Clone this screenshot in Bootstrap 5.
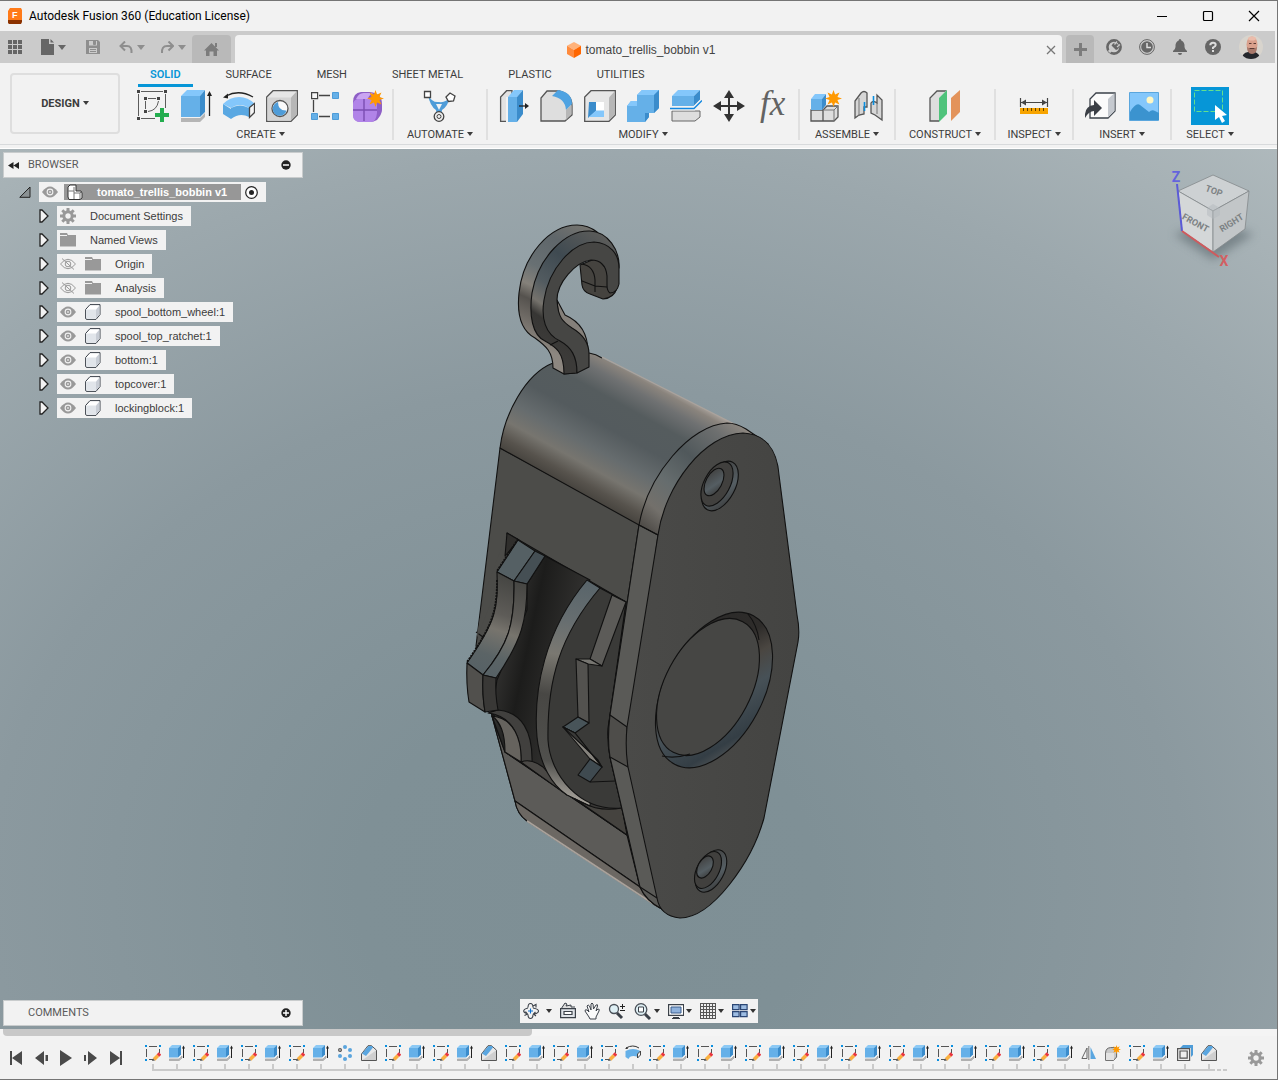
<!DOCTYPE html>
<html lang="en">
<head>
<meta charset="utf-8">
<meta name="viewport" content="width=device-width, initial-scale=1">
<title>Autodesk Fusion 360 (Education License)</title>
<link href="https://cdn.jsdelivr.net/npm/bootstrap@5.3.0/dist/css/bootstrap.min.css" rel="stylesheet">
<style>
:root { --ui: #f2f2f2; --bar: #cbcbcb; --ink: #3c3c3c; --accent: #0696d7; }
body { font-family: "Liberation Sans", Arial, sans-serif; font-size: 11px; line-height: 16px; color: var(--ink); background: var(--ui); min-height: 100vh; border: solid #757575; border-width: 1px 1px 1px 0; }
button { border: 0; background: none; padding: 0; color: inherit; }
a { color: inherit; text-decoration: none; }
svg { display: block; flex: none; }
.titlebar { height: 30px; padding: 0 17px 0 7px; font: 12px/16px Roboto, "Noto Sans", sans-serif; color: #000; gap: 6px; }
.winctl { gap: 34px; }
.tabbar { height: 32px; background: var(--bar); color: #666; margin-right: 2px; }
.quick { width: 192px; padding: 0 6px 0 8px; }
.faded { color: #8e8e8e; }
.hometab, .plustab { height: 28px; background: #b9b9b9; border-radius: 4px 4px 0 0; color: #7c7c7c; }
.hometab { width: 39px; }
.plustab { width: 28px; margin-left: 4px; }
.doctab { height: 28px; background: var(--ui); border-radius: 4px 4px 0 0; margin-left: 4px; padding: 2px 6px 0 2px; font-size: 12px; color: #444; }
.account { gap: 17px; padding: 0 12px 0 12px; }
.avatar { margin-left: 1px; }
.ribbon { height: 86px; border-bottom: 1px solid #fff; }
.ribbon-in { height: 82px; border-bottom: 1px solid #d8dadc; }
.design { width: 110px; height: 61px; margin: 10px 11px 0 10px; border: 2px solid #dedede; border-radius: 4px; font: bold 11px/16px Roboto, sans-serif; }
.caps { font: 11px/16px Roboto, "Liberation Sans", sans-serif; }
.ribtabs { gap: 21px; padding-left: 7px; height: 24px; }
.ribtabs a { padding: 4px 12px 1px; border-bottom: 3px solid transparent; }
.ribtabs a.current { color: var(--accent); border-color: var(--accent); font-weight: 600; }
.group { height: 51px; margin-top: 2px; border-right: 2px solid #e0e0e0; padding: 1px 5px 0; }
.group:last-child { border: 0; }
.group.g-create { width: 263px; padding: 1px 2px 0 0; } .g-auto { width: 94px; } .g-mod { width: 312px; } .g-asm { width: 96px; }
.g-con { width: 100px; } .g-insp { width: 78px; } .g-ins { width: 98px; } .g-sel { width: 76px; }
.tools { height: 37px; }
.tools button { width: 43px; display: flex; justify-content: center; align-items: flex-start; }
.tools .picked { background: var(--accent); width: 38px; height: 38px; margin-top: -3px; align-items: center; }
.caret::after { content: ""; display: inline-block; margin-left: 3px; vertical-align: 2px; border: 3px solid transparent; border-top: 4px solid; border-bottom: 0; }
.tri { border: 4px solid transparent; border-top: 5px solid; border-bottom: 0; }
.tri-s { border: 3px solid transparent; border-top: 4px solid #333; border-bottom: 0; }
.view { background: radial-gradient(ellipse 90% 110% at 46% 84%, #7e8f95, #7f9096 20%, #8b999f 52%, #9ca8ad 76%, #b1bbbe); min-height: 640px; }
.panelbar { width: 300px; height: 26px; background: var(--ui); border: 1px solid #c9cccd; padding: 0 11px 0 4px; color: #5a5a5a; }
.panelbar .heading { margin: 0 auto 0 9px; }
.panelbar .heading.alone { margin-left: 20px; }
.sidecol { padding: 3px; }
.tree { margin: 4px 0 0 16px; gap: 4px; }
.node { gap: 8px; height: 20px; }
.node.child { padding-left: 20px; }
.tag { background: var(--ui); height: 20px; padding: 0 8px 0 3px; }
.tag .txt { margin-left: 14px; }
.tag svg + svg { margin-left: 9px; }
.rootname { background: #979797; color: #fff; font-weight: bold; height: 16px; padding: 0 14px 0 3px; margin: 0 4px 0 6px; gap: 14px; }
.navbox { height: 24px; background: var(--ui); left: 50%; bottom: 6px; transform: translateX(-50%); padding: 0 2px 0 3px; gap: 8px; }
.navbox button { display: flex; align-items: center; gap: 2px; }
.scroller { height: 7px; background: #f4f4f4; }
.scroller div { width: 41.4%; height: 7px; margin-left: 3px; background: #c8c8c8; border-radius: 0 0 4px 4px; }
.timeline { height: 43px; color: #4a4a4a; padding: 0 13px 0 9px; }
.play { width: 114px; margin-right: 18px; padding-top: 14px; }
.steps { padding-top: 9px; height: 35px; }
.steps button { width: 24px; height: 26px; position: relative; display: flex; justify-content: center; }
.steps button::after { content: ""; position: absolute; inset: 19px 0 0 0; border-bottom: 2px solid #cacaca; background: linear-gradient(#cacaca, #cacaca) 11px 0 / 2px 100% no-repeat; }
.steps button:first-child::after { left: 11px; background-position: 0 0; }
.steps button:last-child::after { right: 6px; }
.dashes { width: 10px; height: 35px; margin: 0 auto 0 -4px; background: repeating-linear-gradient(90deg, #cacaca 0 4px, transparent 4px 6px) bottom / 100% 2px no-repeat; }
</style>
<script src="https://cdn.jsdelivr.net/npm/bootstrap@5.3.0/dist/js/bootstrap.bundle.min.js"></script>
</head>
<body class="d-flex flex-column">
<svg width="0" height="0" class="position-absolute" aria-hidden="true">
  <symbol id="star" viewBox="0 0 16 16"><path fill="#f90" d="M8 0l1.500 4.300L13.600 2.400 11.700 6.500 16 8l-4.300 1.500 1.900 4.100-4.100-1.900L8 16l-1.500-4.300-4.100 1.900 1.900-4.100L0 8l4.300-1.500-1.900-4.100 4.100 1.900z"/></symbol>
  <symbol id="eye" viewBox="0 0 16 12"><path fill="#999" d="M0 6q8-11 16 0q-8 11-16 0"/><circle cx="8" cy="6" r="3.400" fill="#f2f2f2"/><circle cx="8" cy="6" r="2.300" fill="#999"/><circle cx="8" cy="6" r="1" fill="#ddd"/></symbol>
  <symbol id="eyeoff" viewBox="0 0 16 12"><g fill="none" stroke="#999"><path d="M.5 6q7.500-9.500 15 0q-7.500 9.500-15 0"/><circle cx="8" cy="6" r="2.800"/><path d="M2 .5l12 11"/></g></symbol>
  <symbol id="folder" viewBox="0 0 16 14"><path fill="#999" d="M0 0h7l1 2h8v11.500H0z"/><path stroke="#f2f2f2" d="M0 2.500h7"/></symbol>
  <symbol id="gear" viewBox="0 0 16 16"><g fill="none" stroke="#999"><circle cx="8" cy="8" r="4.200" stroke-width="3"/><path stroke-width="3" d="M8 0v3M8 13v3M0 8h3M13 8h3M2.300 2.300l2.200 2.200M11.500 11.500l2.200 2.200M13.700 2.300l-2.200 2.200M4.500 11.500l-2.200 2.200"/></g></symbol>
  <symbol id="cube" viewBox="0 0 16 16"><path fill="#fff" stroke="#3b4149" d="M.6 14V5.500L5 .6h10v10L11 15.400H2Q.6 15.400.6 14z"/><path fill="#e1e5ea" d="M1.200 5.500H11v9.300H2l-.8-.8z"/><path fill="#c8cdd5" d="M11 5.500l3.500-4v8.800L11 14.500z"/></symbol>
  <symbol id="arrow" viewBox="0 0 10 14"><path d="M1 1h2l6 6-6 6H1z" fill="#f2f2f2" stroke="#222" stroke-width="1.300"/></symbol>
  <symbol id="sketch" viewBox="0 0 16 16"><path d="M4 1.500h8M1.500 4v8M14.500 4v4M4 14.500h4" stroke="#555" fill="none"/><path fill="#0a8fe0" d="M0 0h2v2H0zM14 0h2v2h-2zM0 14h2v2H0z"/><path stroke="#fbb040" stroke-width="3.500" d="M9 14.500l4-4"/><path stroke="#e8343c" stroke-width="3.500" d="M13 10.500l2-2"/><path d="M7 16l3-.6-2-2z" fill="#555"/></symbol>
  <symbol id="extr" viewBox="0 0 16 16"><path fill="#bbb" stroke="#999" stroke-width=".6" d="M.3 14H10l3-3v2l-3 2.700H.3z"/><path fill="#65b0e8" d="M0 3h9v9.500H0z"/><path fill="#8cc9f5" d="M0 3l3-3h9L9 3z"/><path fill="#3b8ccb" d="M9 3l3-3v9.500l-3 3z"/><path d="M14.500 13V2" stroke="#222"/><path d="M13 3.500L14.500.5l1.500 3z" fill="#222"/></symbol>
  <symbol id="pat" viewBox="0 0 16 16"><g fill="#5ba5dd"><circle cx="8" cy="2" r="2"/><circle cx="13" cy="5" r="2"/><circle cx="13" cy="11" r="2"/><circle cx="8" cy="14" r="2"/><circle cx="3" cy="11" r="2"/></g><circle cx="3" cy="5" r="1.400" fill="none" stroke="#555" stroke-width="1.200"/></symbol>
  <symbol id="cham" viewBox="0 0 16 16"><path d="M.5 15.500V9L7 .7h3.500l5 4.500v10.300z" fill="#e8e8e8" stroke="#555"/><path d="M1.500 15L15 5.500V15z" fill="#cfcfcf"/><path d="M1 8.500L7.500 1H11l1 1.500L5 11z" fill="#5aa6e0"/></symbol>
  <symbol id="revo" viewBox="0 0 16 16"><path d="M1 3q7-4 13 0" stroke="#333" fill="none"/><path d="M0 4h3l-1-2z" fill="#333"/><path d="M.5 6q7.500-4 15 0l-2 7q-1-2-5-2t-5 3l-3-2z" fill="#65b0e8"/><path d="M12.500 13v-4l3-3v4z" fill="#eee" stroke="#444"/></symbol>
  <symbol id="mirr" viewBox="0 0 16 16"><path d="M.9 13.500L6 3v10.500z" fill="none" stroke="#666"/><path d="M9.500 2l5.500 12H9.500z" fill="#5aa6e0"/><path d="M7.800 1v14" stroke="#777"/></symbol>
  <symbol id="form" viewBox="0 0 16 16"><path d="M.6 15.400V8q0-5 5-5.400h6V12l-3 3.400z" fill="#c8c8c8" stroke="#666"/><path d="M1 15V8h8v7z" fill="#e2e2e2"/><use href="#star" x="7" y="0" width="9" height="9"/></symbol>
  <symbol id="shel" viewBox="0 0 16 16"><path d="M3 3l3-3h10v10l-2 2V3z" fill="#4e9cd8"/><path d="M.6 3.600h12v12H.6zM3 6h7.200v7.200H3z" fill="#eee" stroke="#555" stroke-width="1.200"/></symbol>
  <linearGradient id="roof" gradientUnits="userSpaceOnUse" x1="570" y1="487" x2="635" y2="369"><stop offset="0" stop-color="#47443f"/><stop offset=".08" stop-color="#57534d"/><stop offset=".2" stop-color="#77756f"/><stop offset=".34" stop-color="#666c6e"/><stop offset=".52" stop-color="#545b5e"/><stop offset=".72" stop-color="#555c5e"/><stop offset=".86" stop-color="#6f7172"/><stop offset=".95" stop-color="#8a847d"/><stop offset="1" stop-color="#aaa39d"/></linearGradient>
  <linearGradient id="rim" gradientUnits="userSpaceOnUse" x1="648" y1="530" x2="740" y2="425"><stop offset="0" stop-color="#504d49"/><stop offset=".15" stop-color="#73706b"/><stop offset=".35" stop-color="#666d6e"/><stop offset=".6" stop-color="#50585b"/><stop offset=".85" stop-color="#6d6f6f"/><stop offset="1" stop-color="#8d8780"/></linearGradient>
  <linearGradient id="hookside" gradientUnits="userSpaceOnUse" x1="590" y1="225" x2="535" y2="345"><stop offset="0" stop-color="#77756f"/><stop offset=".2" stop-color="#5f666a"/><stop offset=".45" stop-color="#687073"/><stop offset=".6" stop-color="#85817a"/><stop offset=".7" stop-color="#55524e"/><stop offset="1" stop-color="#8d8780"/></linearGradient>
  <linearGradient id="hookbev" gradientUnits="userSpaceOnUse" x1="618" y1="240" x2="545" y2="345"><stop offset="0" stop-color="#5f5e5b"/><stop offset=".35" stop-color="#3f4a51"/><stop offset=".6" stop-color="#525b60"/><stop offset=".75" stop-color="#75726c"/><stop offset=".84" stop-color="#373634"/><stop offset="1" stop-color="#3c3b39"/></linearGradient>
  <linearGradient id="wheel" gradientUnits="userSpaceOnUse" x1="515" y1="580" x2="480" y2="680"><stop offset="0" stop-color="#464643"/><stop offset=".35" stop-color="#5e5c58"/><stop offset=".5" stop-color="#77746d"/><stop offset=".75" stop-color="#5b6466"/><stop offset="1" stop-color="#556065"/></linearGradient>
  <linearGradient id="disk" gradientUnits="userSpaceOnUse" x1="590" y1="580" x2="555" y2="795"><stop offset="0" stop-color="#58646a"/><stop offset=".2" stop-color="#676e70"/><stop offset=".36" stop-color="#7a7871"/><stop offset=".55" stop-color="#484744"/><stop offset=".85" stop-color="#50504d"/><stop offset="1" stop-color="#a09c95"/></linearGradient>
  <linearGradient id="face" x1="0" x2="1"><stop offset="0" stop-color="#4a4a48"/><stop offset="1" stop-color="#444442"/></linearGradient>
  <linearGradient id="dark" x1="0" x2="1" y2=".5"><stop offset="0" stop-color="#474644"/><stop offset=".45" stop-color="#1c1c1b"/><stop offset="1" stop-color="#3b3a38"/></linearGradient>
  <linearGradient id="ring" gradientUnits="userSpaceOnUse" x1="765" y1="615" x2="675" y2="768"><stop offset="0" stop-color="#62605c"/><stop offset=".14" stop-color="#2b2a29"/><stop offset=".34" stop-color="#2e2c2a"/><stop offset=".46" stop-color="#4a4641"/><stop offset=".6" stop-color="#475157"/><stop offset=".8" stop-color="#343e45"/><stop offset="1" stop-color="#77736d"/></linearGradient>
  <linearGradient id="hole" x1="1" x2="0" y2="1"><stop offset="0" stop-color="#3d3b39"/><stop offset=".6" stop-color="#555e63"/><stop offset="1" stop-color="#343332"/></linearGradient>
</svg>

<header class="titlebar d-flex align-items-center">
  <svg width="16" height="17" viewBox="0 0 16 17"><path d="M1 3L3 0h11l1 2v11l-1 1H1z" fill="#ff7a18"/><path d="M1 12h14v2l-1 2H2l-1-1z" fill="#8c3200"/><text x="5" y="10" font-family="Liberation Sans" font-size="9" font-weight="bold" fill="#fff">F</text></svg>
  <span class="me-auto">Autodesk Fusion 360 (Education License)</span>
  <div class="winctl d-flex">
    <button aria-label="Minimize"><svg width="12" height="12"><path d="M1 6.500h10" stroke="#000"/></svg></button>
    <button aria-label="Maximize"><svg width="12" height="12"><rect x="1.500" y="1.500" width="9" height="9" rx="1" fill="none" stroke="#000" stroke-width="1.200"/></svg></button>
    <button aria-label="Close"><svg width="12" height="12"><path d="M1 1l10 10M11 1L1 11" stroke="#000" stroke-width="1.200"/></svg></button>
  </div>
</header>

<div class="tabbar d-flex align-items-end">
  <div class="quick d-flex align-items-center justify-content-between h-100">
    <button aria-label="Data panel"><svg width="14" height="14" fill="#666"><path d="M0 0h4v4H0zM5 0h4v4H5zM10 0h4v4h-4zM0 5h4v4H0zM5 5h4v4H5zM10 5h4v4h-4zM0 10h4v4H0zM5 10h4v4H5zM10 10h4v4h-4z"/></svg></button>
    <button aria-label="File" class="d-flex align-items-center gap-1 ms-1"><svg width="13" height="16" fill="#666"><path d="M0 0h8v5h5v11H0zM9.500 0L13 3.500H9.500z"/></svg><span class="tri"></span></button>
    <button aria-label="Save" class="ms-1"><svg width="14" height="14"><path d="M0 0h12l2 2v12H0z" fill="#8e8e8e"/><path d="M3 1h8v4.500H3zM3 8h8v5H3z" fill="#cbcbcb"/><path d="M7.500 1h2v3.500h-2zM4 9.500h6M4 11.500h6" stroke="#8e8e8e" fill="#8e8e8e"/></svg></button>
    <button aria-label="Undo" class="faded d-flex align-items-center gap-1 ms-1"><svg width="14" height="13"><path d="M2 5h6q5 0 4.500 7" fill="none" stroke="#8e8e8e" stroke-width="2"/><path d="M6 .5L1.500 5 6 9.500" fill="none" stroke="#8e8e8e" stroke-width="2"/></svg><span class="tri"></span></button>
    <button aria-label="Redo" class="faded d-flex align-items-center gap-1"><svg width="14" height="13"><path d="M12 5H7Q1.500 5 2 12" fill="none" stroke="#8e8e8e" stroke-width="2"/><path d="M8.500 .5L13 5 8.500 9.500" fill="none" stroke="#8e8e8e" stroke-width="2"/></svg><span class="tri"></span></button>
  </div>
  <button class="hometab d-flex align-items-center justify-content-center" aria-label="Home"><svg width="15" height="13"><path d="M7.500 0L15 7.500h-2V13H9.500V8.500h-4V13H2V7.500H0zM11 0h2v4h-2z" fill="#7c7c7c"/></svg></button>
  <div class="doctab d-flex align-items-center flex-grow-1">
    <span class="d-flex align-items-center gap-1 mx-auto"><svg width="14" height="16"><path d="M7 0l7 3.800L7 8 0 3.800z" fill="#ffb27a"/><path d="M0 3.800L7 8v8l-7-4z" fill="#ff8a3c"/><path d="M14 3.800L7 8v8l7-4z" fill="#f60"/></svg>tomato_trellis_bobbin v1</span>
    <button aria-label="Close tab"><svg width="10" height="10"><path d="M1 1l8 8M9 1L1 9" stroke="#777" stroke-width="1.300"/></svg></button>
  </div>
  <button class="plustab d-flex align-items-center justify-content-center" aria-label="New tab"><svg width="13" height="13"><path d="M6.500 0v13M0 6.500h13" stroke="#7c7c7c" stroke-width="3"/></svg></button>
  <div class="account d-flex align-items-center h-100">
    <button aria-label="Extensions"><svg width="16" height="16"><circle cx="8" cy="8" r="6.600" fill="none" stroke="#666" stroke-width="2.600"/><path d="M3 13l4.500-4.500" stroke="#cbcbcb" stroke-width="3"/><path d="M5.500 6.500l4.500 4.500q3-1 3.500-4L9.500 3.500q-3 .5-4 3z" fill="#666"/><path d="M8.500 5.500L11 2.500M11 8l3-2.500" stroke="#cbcbcb" stroke-width="1.300"/></svg></button>
    <button aria-label="Job status"><svg width="16" height="16"><circle cx="8" cy="8" r="7.400" fill="none" stroke="#666"/><circle cx="8" cy="8" r="5.800" fill="#666"/><path d="M8 4v4.500h4" fill="none" stroke="#ddd" stroke-width="1.500"/></svg></button>
    <button aria-label="Notifications"><svg width="16" height="16"><path d="M8 0q1.300 0 1.300 1.500Q13 3 12.500 8q0 2 2.500 4v1H1v-1q2.500-2 2.500-4Q3 3 6.700 1.500 6.700 0 8 0zM6 14h4q0 2-2 2t-2-2z" fill="#666"/></svg></button>
    <button aria-label="Help"><svg width="16" height="16"><circle cx="8" cy="8" r="8" fill="#666"/><path d="M5.300 6.300q0-2.600 2.700-2.600t2.700 2.300Q10.700 7.300 8 8.600V10M8 11v2" fill="none" stroke="#ddd" stroke-width="2"/></svg></button>
    <button aria-label="Account" class="avatar"><svg width="24" height="24" viewBox="0 0 24 24"><clipPath id="av"><circle cx="12" cy="12" r="12"/></clipPath><g clip-path="url(#av)"><path d="M0 0h24v24H0z" fill="#d8d4cd"/><path d="M3 24q0-6 6-7h7q5 2 5 7z" fill="#25272c"/><ellipse cx="13" cy="9.500" rx="5.500" ry="8" fill="#d9a08c"/><path d="M8 12q5 4 10 0 0 7-5 7t-5-7" fill="#a9796b"/><path d="M10 8.500h2.500M14.500 8.500H17M10.500 13.500h5" stroke="#5a3a33"/><ellipse cx="13" cy="3.500" rx="4" ry="2" fill="#ebbcab"/></g></svg></button>
  </div>
</div>

<div class="ribbon"><div class="ribbon-in d-flex">
  <button class="design caret">DESIGN</button>
  <div class="flex-grow-1 caps">
    <nav class="ribtabs d-flex">
      <a href="#" class="current">SOLID</a><a href="#">SURFACE</a><a href="#">MESH</a><a href="#">SHEET METAL</a><a href="#">PLASTIC</a><a href="#">UTILITIES</a>
    </nav>
    <div class="d-flex">
      <div class="group g-create"><div class="tools d-flex">
        <button aria-label="Create sketch"><svg width="32" height="32"><path d="M4 1.500h22M28.500 4v14M1.500 4v22M4 28.500h14" fill="none" stroke="#5c5c5c"/><path d="M11 8.500h8M8.500 11v8M11 21.500q9-1 10.500-10.500" fill="none" stroke="#5c5c5c"/><path fill="#444" d="M0 0h3v3H0zM27 0h3v3h-3zM0 27h3v3H0zM7 7h3v3H7zM20 7h3v3h-3zM7 20h3v3H7z"/><path d="M25 18v14M18 25h14" stroke="#23ad4e" stroke-width="4"/></svg></button>
        <button aria-label="Extrude"><svg width="32" height="32"><path d="M1 28h19l5-5v4l-5 5H1z" fill="#b5b5b5"/><path d="M1 6h19v21H1z" fill="#65b0e8"/><path d="M1 6l6-6h18l-5 6z" fill="#84c7fb"/><path d="M20 6l5-6v22l-5 5z" fill="#3b8ccb"/><path d="M29.500 26V3" stroke="#222" stroke-width="1.300"/><path d="M27 6l2.500-5L32 6z" fill="#222"/></svg></button>
        <button aria-label="Revolve"><svg width="32" height="32"><path d="M3 6q13-7 27 1" fill="none" stroke="#222" stroke-width="1.300"/><path d="M0 7.500l5-4v5z" fill="#222"/><path d="M0 14q7-7 16-7t16 7l-6 4q-9-6-18 0z" fill="#84c7fb"/><path d="M0 14l8 5v10l-8-5zM8 18q9-5 18 0v9q-9-5-18 2z" fill="#5aa8e2"/><path d="M26.500 17.500l5-4v9l-5 5z" fill="#f5f5f5" stroke="#444" stroke-width="1.300"/></svg></button>
        <button aria-label="Hole"><svg width="32" height="32"><path d="M.7 31.300V7L7 .7h24.300V25L25 31.300z" fill="#e6e6e6" stroke="#555" stroke-width="1.300"/><path d="M1.500 7.500H25v23H1.500z" fill="#d4d4d4"/><path d="M25 7.500l5.500-6V25L25 30.500z" fill="#b7b7b7"/><circle cx="14" cy="18.500" r="8" fill="#fafafa" stroke="#555" stroke-width="1.300"/><path d="M12 12q0 9 8.500 8.500A7 7 0 1112 12z" fill="#4e9cd8"/></svg></button>
        <button aria-label="Rectangular pattern"><svg width="32" height="32"><path d="M10 5.500h11M4.500 10v12M10 26.500h11" stroke="#444" stroke-width="1.300"/><path d="M2.600 2.600h6v6h-6z" fill="#f7f7f7" stroke="#444" stroke-width="1.200"/><path d="M23.500 2.500h6v6h-6zM2.500 23.500h6v6h-6zM23.500 23.500h6v6h-6z" fill="#65b0e8" stroke="#4e9cd8"/></svg></button>
        <button aria-label="Create form"><svg width="32" height="32"><path d="M1 12Q1 3 9 2h9q12 1 12 12v6q0 4-5 10-3 2-8 2H9q-8 0-8-8z" fill="#8e5fc6"/><path d="M1 14q0-3 4-5h16q4 2 4 6v8q-1 9-6 9H8q-7 0-7-8z" fill="#b184e8"/><path d="M4 9q3-7 9-6h8q-5 3-5 6z" fill="#caa5f2"/><path d="M1 20h24M12 9v22" stroke="#7b4db3" stroke-width="1.400"/><use href="#star" x="15" y="0" width="17" height="17"/></svg></button>
      </div><div class="text-center caret">CREATE</div></div>
      <div class="group g-auto"><div class="tools d-flex justify-content-center">
        <button aria-label="Automated modeling"><svg width="34" height="32"><path d="M5 5q4 8 11 7 7 1 11-5-2 9-8 13l-1 7h-4l-1-7Q7 16 5 5z" fill="#4e9cd8"/><path d="M13 14h6l-3 6z" fill="#f2f2f2"/><path d="M1.500 1.500h6v6h-6z" fill="#fff" stroke="#444" stroke-width="1.300"/><path d="M23 7l4-4 5 3-1.500 5-5 .5z" fill="#fff" stroke="#444" stroke-width="1.300"/><circle cx="16" cy="26.500" r="4.800" fill="#eee" stroke="#444" stroke-width="1.300"/><circle cx="16" cy="26.500" r="2" fill="none" stroke="#444"/></svg></button>
      </div><div class="text-center caret">AUTOMATE</div></div>
      <div class="group g-mod"><div class="tools d-flex">
        <button aria-label="Press pull"><svg width="32" height="32"><path d="M2.600 31.300V7l6-6.300H14v30.600z" fill="#e2e2e2" stroke="#555" stroke-width="1.300"/><path d="M8 7h11v25H8z" fill="#f2f2f2"/><path d="M10 7h9v25h-9z" fill="#65b0e8"/><path d="M10 7l6-7h9l-6 7z" fill="#84c7fb"/><path d="M19 7l6-7v24l-6 8z" fill="#3b8ccb"/><path d="M21 16h8" stroke="#222" stroke-width="1.300"/><path d="M27 13l4 3-4 3z" fill="#222"/></svg></button>
        <button aria-label="Fillet"><svg width="34" height="32"><path d="M1 31V8l6-7h12q13 3 13 15v9l-7 6z" fill="#dedede" stroke="#555" stroke-width="1.300"/><path d="M12 6l6-6q14 2 14 14l-6 6Q25 8 12 6z" fill="#4fa3e2"/><path d="M26 20l5.500-5v9L26 30z" fill="#b7b7b7"/></svg></button>
        <button aria-label="Shell"><svg width="32" height="32"><path d="M.7 31.300V7L7 .7h24.300V25L25 31.300z" fill="#e6e6e6" stroke="#555" stroke-width="1.300"/><path d="M25 7.500l5.500-6V25L25 30.500z" fill="#b7b7b7"/><path d="M5 12h15v15H5z" fill="#fff"/><path d="M5 12l7 0v9l-8 7z" fill="#3b8ccb"/><path d="M5 27l7-6.500h8V27z" fill="#84c7fb"/></svg></button>
        <button aria-label="Combine"><svg width="32" height="32"><path d="M0 16l4-5h6V5l5-5h17v18l-5 5h-5v4l-4 5H0z" fill="#65b0e8"/><path d="M0 16l4-5h6v5zM10 5l5-5h17l-5 5z" fill="#84c7fb"/><path d="M27 5l5-5v18l-5 5zM18 23h4v4l-4 5z" fill="#3b8ccb"/></svg></button>
        <button aria-label="Split body"><svg width="32" height="32"><path d="M2 31V21h28v6l-5 4z" fill="#dedede" stroke="#666"/><path d="M2 6h22v10H2z" fill="#65b0e8"/><path d="M2 6l6-6h22l-6 6z" fill="#84c7fb"/><path d="M24 6l6-6v10l-6 6z" fill="#3b8ccb"/><path d="M0 18.500h24l8-8" fill="none" stroke="#f2f2f2" stroke-width="4"/><path d="M0 18.500h24l8-8" fill="none" stroke="#1287e0" stroke-width="1.400"/></svg></button>
        <button aria-label="Move"><svg width="32" height="32"><path d="M16 4v24M4 16h24" stroke="#333" stroke-width="2"/><path d="M16 0l5 8H11zM16 32l5-8H11zM0 16l8-5v10zM32 16l-8-5v10z" fill="#333"/></svg></button>
        <button aria-label="Change parameters"><svg width="42" height="36" overflow="visible"><text x="9" y="25" font-family="Liberation Serif, serif" font-style="italic" font-size="35" fill="#636363">fx</text></svg></button>
      </div><div class="text-center caret">MODIFY</div></div>
      <div class="group g-asm"><div class="tools d-flex">
        <button aria-label="New component"><svg width="32" height="32"><path d="M1 20h12v11H1zM13 20l4-4h11v11l-4 4H13z" fill="#dedede" stroke="#555" stroke-width="1.300"/><path d="M13 20h11v11M24 20l4-4" fill="none" stroke="#777"/><path d="M1 9h11v11H1z" fill="#65b0e8"/><path d="M1 9l4-5h11l-4 5z" fill="#84c7fb"/><path d="M12 9l4-5v11l-4 5z" fill="#3b8ccb"/><use href="#star" x="15" y="0" width="17" height="17"/></svg></button>
        <button aria-label="Joint"><svg width="32" height="32"><path d="M3 28V11l6-8q3-3 6 0v14h-3v7l-5 1zM19 13q2-3 6 0V5l5 5v20l-7-5-4-2z" fill="#d6d6d6" stroke="#555" stroke-width="1.300"/><path d="M7 8v18M25 13v11" stroke="#777"/><path d="M12.500 12v9M21.500 6v9" stroke="#0a8fe0" stroke-width="1.600"/></svg></button>
      </div><div class="text-center caret">ASSEMBLE</div></div>
      <div class="group g-con"><div class="tools d-flex justify-content-center">
        <button aria-label="Offset plane"><svg width="32" height="32"><path d="M1 31V8l7-7h10v30z" fill="#dedede" stroke="#555" stroke-width="1.300"/><path d="M10 8l8-8h1v32h-9z" fill="#f2f2f2"/><path d="M10 8l8-8v24l-8 8z" fill="#4fc37b"/><path d="M22 8l9-8v22l-9 9z" fill="#e3935b"/></svg></button>
      </div><div class="text-center caret">CONSTRUCT</div></div>
      <div class="group g-insp"><div class="tools d-flex justify-content-center">
        <button aria-label="Measure"><svg width="30" height="32"><path d="M1.500 8v9M28.500 8v9M2 12.500h26" stroke="#444" stroke-width="1.200"/><path d="M2 12.500l5-3v6zM28 12.500l-5-3v6z" fill="#444"/><path d="M1 18h28v6H1z" fill="#f7a400"/><path d="M4.500 18v3M8.500 18v3M12.500 18v3M16.500 18v3M20.500 18v3M24.500 18v3" stroke="#654300"/></svg></button>
      </div><div class="text-center caret">INSPECT</div></div>
      <div class="group g-ins"><div class="tools d-flex">
        <button aria-label="Insert derive"><svg width="32" height="32"><path d="M5 28V9l6-6h19v18l-7 7z" fill="#fbfbfb" stroke="#3b4149" stroke-width="1.300"/><path d="M23 9l6.500-6v18L23 27.500z" fill="#c5c9cf"/><path d="M0 28q-1-12 9-13v-5l8 8-8 8v-5q-5 0-9 7z" fill="#3b3f46"/></svg></button>
        <button aria-label="Insert image"><svg width="30" height="32"><path d="M.5 2.500h29v28H.5z" fill="#84c7fb" stroke="#5aa6dd"/><circle cx="21" cy="10" r="3.500" fill="#fff7c4"/><path d="M1 22q6-10 10-7l9 7q3-3 6-1l4 2v7H1z" fill="#3b93cf"/></svg></button>
      </div><div class="text-center caret">INSERT</div></div>
      <div class="group g-sel"><div class="tools d-flex justify-content-center">
        <button aria-label="Select" class="picked"><svg width="36" height="36"><path d="M2.500 2.500h28v21h-28z" fill="none" stroke="#62e08e" stroke-dasharray="5 2"/><path d="M23 17v15l4-3 3 6 3-2-3-5 5-1z" fill="#fff"/></svg></button>
      </div><div class="text-center caret">SELECT</div></div>
    </div>
  </div>
</div></div>

<main class="view flex-grow-1 position-relative d-flex">
  <svg class="position-absolute top-0 start-0 w-100 h-100" viewBox="0 149 1277 880" role="img" aria-label="Bobbin model">
    <g stroke="#111" stroke-width="1.100" stroke-linejoin="round">
      <!-- housing -->
      <path d="M500 448L476 646L492 716L515 801Q517 814 527 821L660 908L700 700L640 524z" fill="#4c4c49"/>
      <path d="M500 448C504 415 525 374 553 363L589 353Q596 354 602 358L743 428L690 470L639 525z" fill="url(#roof)" stroke="none"/>
      <path d="M639 525L500 448C504 415 525 374 553 363M589 353Q596 354 602 358" fill="none"/>
      <path d="M602 357L742 428" stroke="#aaa39d" stroke-width="1.400"/>
      <path d="M492 716L515 801L640 887L627 835L505 752z" fill="#5c5b58"/>
      <path d="M515 801Q517 814 527 821L658 908L640 887z" fill="#6c6863" stroke="none"/>
      <path d="M515 801Q517 814 527 821" fill="none"/>
      <path d="M527 821L652 903" stroke="#aaa29b" stroke-width="1.600"/>
      <path d="M515 801L640 887M476 632L483 637"/>
      <!-- opening -->
      <path d="M507 533L626 602L610 715L608 733L610 757L627 835L505 752L492 716L500 590z" fill="url(#dark)"/>
      <path d="M507 533L519 540L498 572L492 600L476 640L484 595z" fill="#4c4c49" stroke="none"/>
      <path d="M507 533L519 540L505 556z" fill="#2f2e2c"/>
      <!-- knob wheel -->
      <path d="M545 556L590 580Q540 640 538 730Q542 765 556 786L521 762L492 712L497 680L527 610L527 584z" fill="url(#dark)"/>
      <path d="M498 710C522 712 533 732 532 763L521 762C521 735 512 716 488 713z" fill="#41403e"/>
      <path d="M492 716C514 718 522 740 521 762L505 752C505 735 501 722 492 716z" fill="#66635e"/>
      <path d="M521 762Q531 758 543 767L567 795z" fill="#4a4845"/>
      <path d="M518 540L535 551L514 581L497 572z" fill="#556064"/>
      <path d="M535 551L545 556L527 584L514 581z" fill="#454f54"/>
      <path d="M497 572C498 608 497 620 467 663L483 675C508 645 515 625 514 581z" fill="url(#wheel)"/>
      <path d="M514 581L527 584C527 620 522 640 496 678L483 675C508 645 515 625 514 581z" fill="url(#wheel)"/>
      <path d="M467 663Q466 684 469 702L485 712Q482 695 483 675z" fill="#51504d"/>
      <path d="M483 675L496 678Q495 694 498 710L485 712Q482 695 483 675z" fill="#393836"/>
      <path d="M518 539L497 571M497 580C497 615 490 628 467 662" stroke="#111" stroke-width="1.800" stroke-dasharray="2 1" fill="none"/>
      <!-- ratchet disk -->
      <path d="M587 580C545 630 533 690 537 737C540 765 552 785 567 795L590 806L600 588z" fill="url(#disk)"/>
      <path d="M600 588C560 635 547 680 548 740C550 775 580 812 622 808L610 757L608 733L610 715L626 602z" fill="#3a3a38"/>
      <path d="M612 595L626 602L602 666L590 659z" fill="#5c5b58"/>
      <path d="M576 659L590 659L602 666L588 664z" fill="#777671"/>
      <path d="M576 659L588 664L589 723L578 717z" fill="#53524f"/>
      <path d="M578 717L589 723L575 733L563 727z" fill="#485459"/>
      <path d="M563 727L575 733L602 767L590 759z" fill="#86837d"/>
      <path d="M563 727L575 733L602 767L598 760z" fill="#3a3a38"/>
      <path d="M590 759L602 767L590 782L578 775z" fill="#3f4a50"/>
      <path d="M590 782L616 781"/>
      <path d="M575 799L627 835L622 808Q600 812 583 803z" fill="#45433f"/>
      <!-- cover plate rim -->
      <path d="M639 525C648 475 690 425 727 423Q736 423 746 429L768 444L659 540L628 767L658 903L662 909Q646 901 640 887L610 757Q607 742 608 728L610 715z" fill="url(#rim)"/>
      <path d="M639 525L610 715Q607 740 610 757L640 887Q646 901 662 909L628 760L658 535z" fill="#5a5a57"/>
      <path d="M610 715L627 727L628 767L610 757Q607 740 610 715z" fill="#4e4d4a"/>
      <!-- cover plate -->
      <path d="M658 535C665 485 705 434 743 433C764 434 777 448 779 475L797 615Q800 630 798 642L764 818C752 862 712 918 680 918Q660 916 657 898L628 767Q625 748 627 727z" fill="url(#face)"/>
      <path d="M639 525L658 535M640 887L657 898"/>
      <ellipse cx="714" cy="690" rx="84" ry="49" transform="rotate(-62 714 690)" fill="url(#ring)"/>
      <ellipse cx="708" cy="687" rx="74" ry="43" transform="rotate(-62 708 687)" fill="#464644"/>
      <path d="M748 614Q757 625 759 640M662 756Q675 759 690 754" fill="none"/>
      <ellipse cx="720" cy="486" rx="27" ry="15" transform="rotate(-62 720 486)" fill="url(#hole)"/>
      <ellipse cx="717" cy="484" rx="24" ry="13" transform="rotate(-62 717 484)" fill="#41403e"/>
      <ellipse cx="714" cy="482" rx="15" ry="8" transform="rotate(-62 714 482)" fill="url(#hole)"/>
      <ellipse cx="711" cy="871" rx="23" ry="13" transform="rotate(-62 711 871)" fill="url(#hole)"/>
      <ellipse cx="708" cy="870" rx="20" ry="11" transform="rotate(-62 708 870)" fill="#41403e"/>
      <ellipse cx="705" cy="867" rx="12" ry="7" transform="rotate(-62 705 867)" fill="url(#hole)"/>
      <!-- hook -->
      <path d="M580 265L582 285Q583 292 590 294L603 299Q614 298 617 288L607 270L597 258z" fill="#45433f"/>
      <path d="M582 264Q594 266 595 280V292M582 281L595 286L607 287" fill="none"/>
      <path d="M557 300L565 315Q588 325 588 352L580 350L560 330z" fill="#85807a"/>
      <path d="M553 368C553 352 546 346 535 338C520 330 517 312 519 293C523 255 550 225 577 225Q588 225 597 232L583 250L545 300L575 373L564 374z" fill="url(#hookside)"/>
      <path d="M564 374C564 352 556 347 545 341C532 335 529 315 532 293C538 258 565 230 590 231C608 232 620 250 619 268L600 248L575 253L550 285L550 315L580 350L577 373z" fill="url(#hookbev)"/>
      <path d="M577 373C577 356 571 347 560 341C545 334 541 318 544 300C549 268 573 242 594 242C610 243 619 254 619 268V284Q617 293 610 293Q607 291 607 285V276C606 265 600 260 591 260C575 262 557 283 557 300C558 318 563 322 572 328Q589 338 589 354V367z" fill="#464644"/>
      <path d="M550 345L558 341"/>
    </g>
    <!-- view cube -->
    <defs><filter id="soft" x="-30%" y="-80%" width="160%" height="260%"><feGaussianBlur stdDeviation="5"/></filter></defs>
    <path d="M1174 234L1213 260L1254 234L1213 222z" fill="#5b686d" opacity=".6" filter="url(#soft)"/>
    <g stroke="#84898b" stroke-width=".8">
      <path d="M1213 175L1249 191L1213 211L1178 191z" fill="#cdd1d3"/>
      <path d="M1178 191L1213 211V252L1182 231z" fill="#d4d7d8"/>
      <path d="M1249 191L1213 211V252L1245 229z" fill="#c2c6c8"/>
    </g>
    <path d="M1213 204l7 4v7l-7 4-6-4v-7z" fill="#b3babe" opacity=".5"/>
    <path d="M1177 184L1182 231" stroke="#5b5bd8" stroke-width="2"/><path d="M1182 231L1219 257" stroke="#cf5a5d" stroke-width="2"/>
    <g font-family="Roboto, sans-serif" fill="#7d8284" font-weight="bold" text-anchor="middle">
      <text x="1214" y="194" font-size="9" transform="rotate(20 1214 191)">TOP</text>
      <text x="1196" y="226" font-size="9" transform="rotate(29 1196 222)">FRONT</text>
      <text x="1231" y="226" font-size="9" transform="rotate(-32 1231 222)">RIGHT</text>
      <text x="1176" y="182" font-size="14" fill="#6464dc">Z</text><text x="1224" y="266" font-size="14" fill="#d25f62">X</text>
    </g>
  </svg>

  <div class="sidecol position-relative d-flex flex-column">
    <section>
      <div class="panelbar caps d-flex align-items-center"><svg width="11" height="7"><path d="M5.500 0v7L0 3.500zM11 0v7L5.500 3.500z" fill="#222"/></svg><span class="heading">BROWSER</span>
        <button aria-label="Collapse"><svg width="10" height="10"><circle cx="5" cy="5" r="4.700" fill="#222"/><path d="M2 5h6" stroke="#fff" stroke-width="1.500"/></svg></button></div>
      <div class="tree d-flex flex-column">
        <div class="node d-flex align-items-center"><svg width="12" height="12"><path d="M11 1v10.300H.8z" fill="#8b9294" stroke="#222"/></svg>
          <div class="tag d-flex align-items-center"><svg width="16" height="12"><use href="#eye"/></svg><span class="rootname d-flex align-items-center"><svg width="16" height="16"><path d="M1 13V3l2-2h6v6h5l1 2v5l-2 1.500H2z" fill="#fff" stroke="#333"/><path d="M7 15V9h6v6M1 7h6V3M7 7v2M13 9l1-1" fill="none" stroke="#777"/></svg>tomato_trellis_bobbin v1</span><svg width="13" height="13"><circle cx="6.500" cy="6.500" r="5.800" fill="#fff" stroke="#222" stroke-width="1.200"/><circle cx="6.500" cy="6.500" r="2.500" fill="#222"/></svg></div></div>
        <div class="node child d-flex align-items-center"><svg width="10" height="14"><use href="#arrow"/></svg><div class="tag d-flex align-items-center"><svg width="16" height="16"><use href="#gear"/></svg><span class="txt">Document Settings</span></div></div>
        <div class="node child d-flex align-items-center"><svg width="10" height="14"><use href="#arrow"/></svg><div class="tag d-flex align-items-center"><svg width="16" height="14"><use href="#folder"/></svg><span class="txt">Named Views</span></div></div>
        <div class="node child d-flex align-items-center"><svg width="10" height="14"><use href="#arrow"/></svg><div class="tag d-flex align-items-center"><svg width="16" height="12"><use href="#eyeoff"/></svg><svg width="16" height="14"><use href="#folder"/></svg><span class="txt">Origin</span></div></div>
        <div class="node child d-flex align-items-center"><svg width="10" height="14"><use href="#arrow"/></svg><div class="tag d-flex align-items-center"><svg width="16" height="12"><use href="#eyeoff"/></svg><svg width="16" height="14"><use href="#folder"/></svg><span class="txt">Analysis</span></div></div>
        <div class="node child d-flex align-items-center"><svg width="10" height="14"><use href="#arrow"/></svg><div class="tag d-flex align-items-center"><svg width="16" height="12"><use href="#eye"/></svg><svg width="16" height="16"><use href="#cube"/></svg><span class="txt">spool_bottom_wheel:1</span></div></div>
        <div class="node child d-flex align-items-center"><svg width="10" height="14"><use href="#arrow"/></svg><div class="tag d-flex align-items-center"><svg width="16" height="12"><use href="#eye"/></svg><svg width="16" height="16"><use href="#cube"/></svg><span class="txt">spool_top_ratchet:1</span></div></div>
        <div class="node child d-flex align-items-center"><svg width="10" height="14"><use href="#arrow"/></svg><div class="tag d-flex align-items-center"><svg width="16" height="12"><use href="#eye"/></svg><svg width="16" height="16"><use href="#cube"/></svg><span class="txt">bottom:1</span></div></div>
        <div class="node child d-flex align-items-center"><svg width="10" height="14"><use href="#arrow"/></svg><div class="tag d-flex align-items-center"><svg width="16" height="12"><use href="#eye"/></svg><svg width="16" height="16"><use href="#cube"/></svg><span class="txt">topcover:1</span></div></div>
        <div class="node child d-flex align-items-center"><svg width="10" height="14"><use href="#arrow"/></svg><div class="tag d-flex align-items-center"><svg width="16" height="12"><use href="#eye"/></svg><svg width="16" height="16"><use href="#cube"/></svg><span class="txt">lockingblock:1</span></div></div>
      </div>
    </section>
    <div class="panelbar caps d-flex align-items-center mt-auto"><span class="heading alone">COMMENTS</span>
      <button aria-label="Add comment"><svg width="10" height="10"><circle cx="5" cy="5" r="4.700" fill="#222"/><path d="M2 5h6M5 2v6" stroke="#fff" stroke-width="1.400"/></svg></button></div>
  </div>

  <div class="navbox position-absolute d-flex align-items-center" role="toolbar" aria-label="Navigation">
    <button aria-label="Orbit"><svg width="17" height="18" fill="none" stroke="#3b4149" stroke-width="1.100"><path d="M5 5.500Q5 1.500 7.500 1.500T10 5.500M10 12.500q0 4-2.500 4T5 12.500M5 6Q.7 7 .7 9q0 1.500 3 2.500M10 6q5.500 1 5.500 3 0 2-4 3M2.500 9.500l2 2.500-3 1.500M10 4l3-1.500v3M12.500 10l-2 2 2.500 2"/><path d="M7.500 6.500v5M5 9h5" stroke="#0a6fd0"/></svg><span class="tri-s ms-1"></span></button>
    <button aria-label="Look at"><svg width="16" height="18"><path d="M1 7L5 1l2 1-1 2 5-1v2h4" fill="#ddd" stroke="#3b4149"/><path d="M.6 6.600h14.800v9H.6z" fill="#dfe3e8" stroke="#3b4149" stroke-width="1.200"/><path d="M4 9.500h8v3H4z" fill="#fff" stroke="#3b4149" stroke-width="1.200"/></svg></button>
    <button aria-label="Pan"><svg width="16" height="18"><path d="M5 15L1 9q0-2 2-1l2 2-2-6q1-2 2.500 0L7 8V2q1-2 2 0l.5 5L12 3q2-1 1.500 1L12 9l2-2q2 0 1 2l-3 6v2H6z" fill="#fafafa" stroke="#3b4149"/></svg></button>
    <button aria-label="Zoom"><svg width="18" height="18"><circle cx="6" cy="7" r="4.500" fill="#dff0f5" stroke="#4b5159" stroke-width="1.300"/><path d="M9 11l5 5" stroke="#3b4149" stroke-width="3"/><path d="M12 4.500h5M14.500 2v5M12 8.500h5" stroke="#222"/></svg></button>
    <button aria-label="Fit"><svg width="18" height="18"><circle cx="7" cy="7.500" r="5.800" fill="#dff0f5" stroke="#4b5159" stroke-width="1.300"/><path d="M4.500 5h5v5h-5z" fill="#fff" stroke="#3b4149"/><path d="M11 12l5 5" stroke="#3b4149" stroke-width="3"/></svg><span class="tri-s"></span></button>
    <button aria-label="Display settings"><svg width="16" height="18"><path d="M.6 2.600h15v10.800H.6z" fill="#fff" stroke="#3b4149" stroke-width="1.200"/><path d="M3 5h10v6H3z" fill="#8fb2dd" stroke="#3b5c8c"/><path d="M5 15.500h6M4 16.500h8" stroke="#3b4149"/></svg><span class="tri-s"></span></button>
    <button aria-label="Grid"><svg width="16" height="18"><path d="M.5 1.500h15v15H.5z" fill="#eee"/><path d="M.5 1v16M3.500 1v16M6.500 1v16M9.500 1v16M12.500 1v16M15.500 1v16M0 1.500h16M0 4.500h16M0 7.500h16M0 10.500h16M0 13.500h16M0 16.500h16" stroke="#555"/></svg><span class="tri-s"></span></button>
    <button aria-label="Viewports"><svg width="16" height="16"><path d="M.6 1.600h6.500v5H.6zM8.600 1.600h6.500v5H8.600zM.6 8.600h6.500v5H.6zM8.600 8.600h6.500v5H8.600z" fill="#9dbce2" stroke="#2b4674" stroke-width="1.200"/></svg><span class="tri-s"></span></button>
  </div>
</main>

<div class="scroller"><div></div></div>
<footer class="timeline d-flex">
  <div class="play d-flex justify-content-between align-items-start">
    <button aria-label="To start"><svg width="13" height="16" fill="#4a4a4a"><path d="M1 1h2v14H1zM13 1v14L3 8z"/></svg></button>
    <button aria-label="Step back"><svg width="14" height="16" fill="#4a4a4a"><path d="M10 1v14L1 8zM11.500 5H14v6h-2.500z"/></svg></button>
    <button aria-label="Play"><svg width="12" height="16" fill="#4a4a4a"><path d="M0 0l12 8-12 8z"/></svg></button>
    <button aria-label="Step forward"><svg width="14" height="16" fill="#4a4a4a"><path d="M4 1v14l9-7zM0 5h2v6H0z"/></svg></button>
    <button aria-label="To end"><svg width="13" height="16" fill="#4a4a4a"><path d="M10 1h2v14h-2zM0 1v14l10-7z"/></svg></button>
  </div>
  <div class="steps d-flex" id="steps"></div>
  <div class="dashes"></div>
  <button aria-label="Timeline settings"><svg width="16" height="16"><use href="#gear"/></svg></button>
</footer>
<script>
// one letter per feature in the design history
const kinds = { s: 'sketch', e: 'extr', p: 'pat', c: 'cham', r: 'revo', m: 'mirr', f: 'form', h: 'shel' };
document.getElementById('steps').innerHTML = [...'sesesesepcsesecsesesrsesesesesesesesesemfsehc']
  .map(k => `<button aria-label="${kinds[k]}"><svg width="16" height="16"><use href="#${kinds[k]}"/></svg></button>`).join('');
</script>
</body>
</html>
